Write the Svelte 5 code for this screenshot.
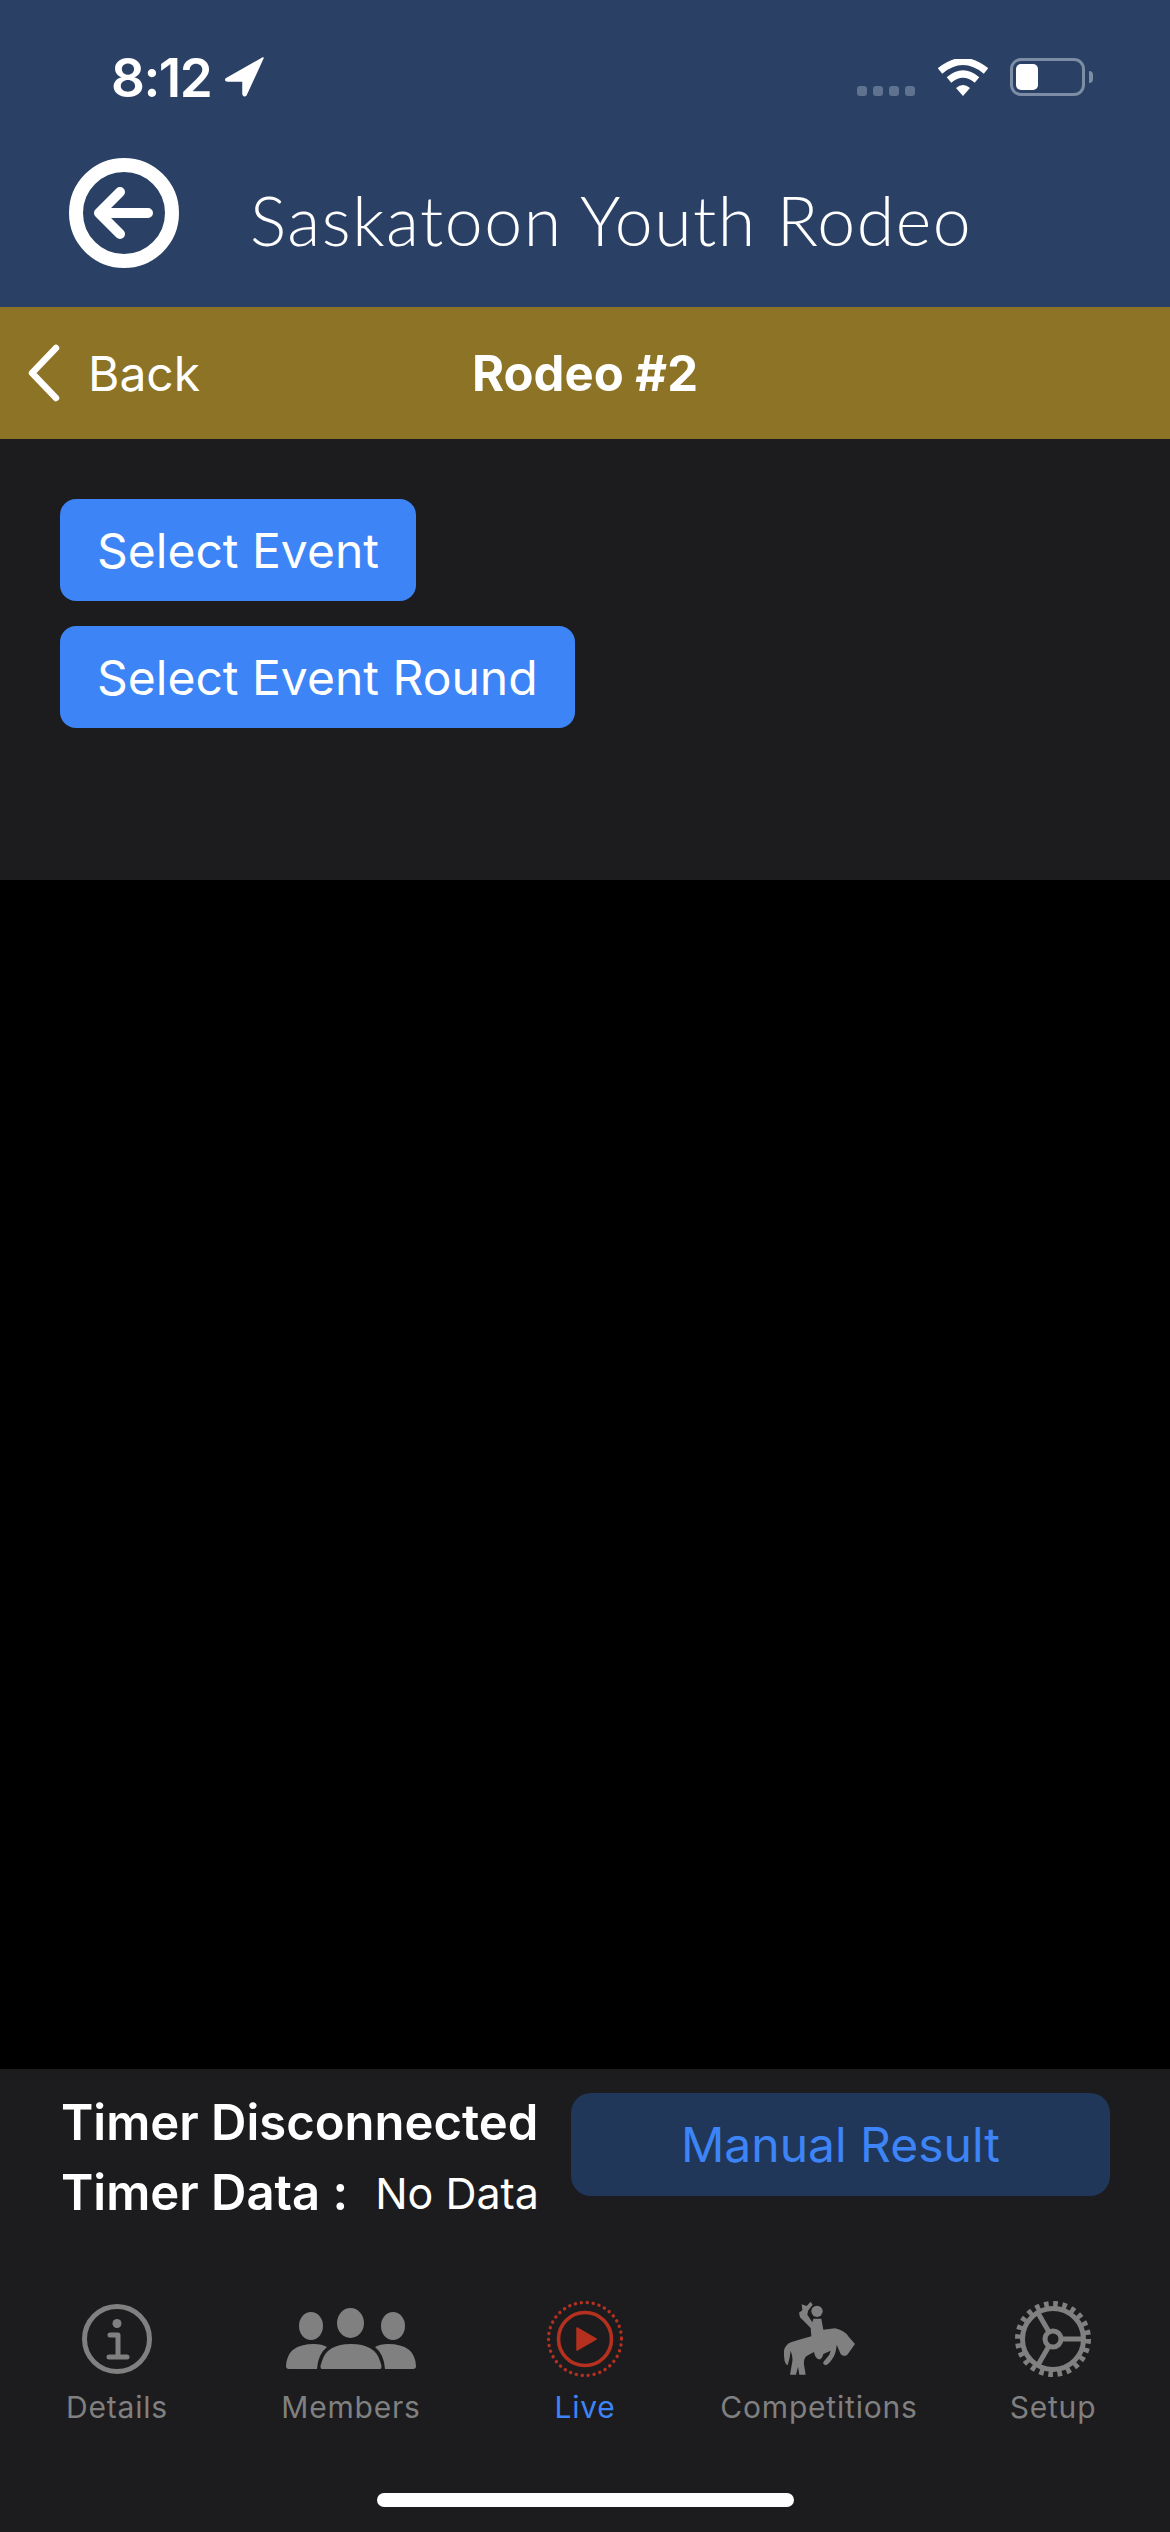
<script>
  const tabs = [
    { id: 'details', label: 'Details' },
    { id: 'members', label: 'Members' },
    { id: 'live', label: 'Live', active: true },
    { id: 'competitions', label: 'Competitions' },
    { id: 'setup', label: 'Setup' }
  ];
</script>

<div class="screen">
  <header class="header">
    <div class="status">
      <div class="time-wrap">
        <span class="time">8:12</span>
        <svg class="loc" viewBox="0 0 40 40" width="40" height="40"><path d="M38 1 L1 22 Q0 24 3 24 L18 24 L18 37 Q19 40 21 38 Z" fill="#fff" stroke="#fff" stroke-width="1.5" stroke-linejoin="round"/></svg>
      </div>
      <div class="status-right">
        <div class="dots"><i></i><i></i><i></i><i></i></div>
        <svg class="wifi" viewBox="0 0 50 38" width="50" height="38">
          <path d="M2 12 Q25 -7 48 12" fill="none" stroke="#fff" stroke-width="7"/>
          <path d="M11 21 Q25 9 39 21" fill="none" stroke="#fff" stroke-width="7"/>
          <path d="M18 29 Q25 23 32 29 L25 37 Z" fill="#fff"/>
        </svg>
        <div class="battery"><div class="cell"></div><div class="nub"></div></div>
      </div>
    </div>
    <div class="brand">
      <svg class="brand-icon" viewBox="0 0 110 110" width="110" height="110">
        <circle cx="55" cy="55" r="48" fill="none" stroke="#fff" stroke-width="14"/>
        <path d="M79 55 H31 M51 34 L30 55 L51 76" fill="none" stroke="#fff" stroke-width="10" stroke-linecap="round" stroke-linejoin="round"/>
      </svg>
      <span class="brand-title">Saskatoon Youth Rodeo</span>
    </div>
  </header>

  <nav class="nav">
    <div class="back">
      <svg viewBox="0 0 36 58" width="36" height="58"><path d="M30 4 L6 29 L30 54" fill="none" stroke="#fff" stroke-width="6.5" stroke-linecap="round" stroke-linejoin="round"/></svg>
      <span>Back</span>
    </div>
    <div class="nav-title">Rodeo #2</div>
    <div></div>
  </nav>

  <section class="panel">
    <button class="btn">Select Event</button>
    <button class="btn">Select Event Round</button>
  </section>

  <main class="void"></main>

  <footer class="footer">
    <div class="timer">
      <div class="timer-text">
        <div class="timer-line strong">Timer Disconnected</div>
        <div class="timer-line"><span class="strong">Timer Data :</span><span class="nodata">No Data</span></div>
      </div>
      <button class="manual">Manual Result</button>
    </div>

    <div class="tabs">
      {#each tabs as t}
        <div class="tab" class:active={t.active}>
          <div class="tab-icon">
            {#if t.id === 'details'}
              <svg viewBox="0 0 70 70" width="70" height="70">
                <circle cx="35" cy="35" r="32.5" fill="none" stroke="#808080" stroke-width="5"/>
                <circle cx="35" cy="19.5" r="4.5" fill="#808080"/>
                <path d="M28 31 H36 V52 M27 53 H45" fill="none" stroke="#808080" stroke-width="5" stroke-linecap="round" stroke-linejoin="round"/>
              </svg>
            {:else if t.id === 'members'}
              <svg viewBox="0 0 130 62" width="130" height="62">
                <ellipse cx="25" cy="18" rx="12" ry="14" fill="#808080"/>
                <ellipse cx="64.500" cy="15" rx="13.500" ry="15" fill="#808080"/>
                <ellipse cx="107" cy="18" rx="12" ry="14" fill="#808080"/>
                <path d="M0 58 Q1 36 28 36 Q36 36 41 39 Q32 46 31 61 H3 Q0 61 0 58 Z" fill="#808080"/>
                <path d="M130 58 Q129 36 102 36 Q94 36 89 39 Q98 46 99 61 H127 Q130 61 130 58 Z" fill="#808080"/>
                <path d="M36 61 Q33 61 36 53 Q41 36 65 36 Q89 36 94 53 Q97 61 94 61 Z" fill="#808080"/>
              </svg>
            {:else if t.id === 'live'}
              <svg viewBox="0 0 78 78" width="78" height="78">
                <circle cx="39" cy="39" r="36.500" fill="none" stroke="#b5301f" stroke-width="3.400" stroke-dasharray="0.1 5.900" stroke-linecap="round"/>
                <circle cx="39" cy="39" r="26.500" fill="none" stroke="#b5301f" stroke-width="3.600"/>
                <path d="M31 28 L50 39 L31 50 Z" fill="#b5301f" stroke="#b5301f" stroke-width="1.500" stroke-linejoin="round"/>
              </svg>
            {:else if t.id === 'competitions'}
              <svg viewBox="42 3 390 300" width="130" height="100">
                <circle cx="231" cy="70" r="17" fill="#808080"/>
                <path d="M177 74 L187 67 L185 49 L200 54 L212 41 L218 50 L204 68 L202 80 L217 103 L220 92 L244 92 L250 125 L285 121 Q312 126 326 146 L345 168 L322 200 Q312 208 302 198 L290 170 Q288 195 280 208 Q270 226 258 232 Q248 230 250 222 L268 200 L272 188 L250 198 Q246 216 236 214 Q226 212 222 192 L200 204 Q190 212 192 230 L197 260 L178 260 L174 236 L168 260 L150 260 L156 226 Q160 210 152 188 Q150 210 143 232 Q130 226 132 188 Q136 168 155 162 L185 153 L214 145 L212 120 L192 100 L180 88 Z" fill="#808080"/>
              </svg>
            {:else}
              <svg viewBox="0 0 78 78" width="78" height="78">
                <circle cx="39" cy="39" r="35" fill="none" stroke="#808080" stroke-width="6" stroke-dasharray="4.600 4.560"/>
                <circle cx="39" cy="39" r="30.500" fill="none" stroke="#808080" stroke-width="5"/>
                <circle cx="39" cy="39" r="8" fill="none" stroke="#808080" stroke-width="5"/>
                <path d="M47 39 H69 M35 32 L24 13 M35 46 L24 65" fill="none" stroke="#808080" stroke-width="5"/>
              </svg>
            {/if}
          </div>
          <span class="tab-label">{t.label}</span>
        </div>
      {/each}
    </div>

    <div class="home"></div>
  </footer>
</div>

<style>
  :global(body) { margin: 0; background: #000; }
  .screen {
    width: 1170px; height: 2532px; display: flex; flex-direction: column;
    font-family: Inter, "Liberation Sans", sans-serif; color: #fff; overflow: hidden;
  }
  .header { height: 307px; background: #2a4165; box-sizing: border-box; flex: none; }
  .status {
    height: 157px; box-sizing: border-box; padding: 50px 85px 0 111px;
    display: flex; justify-content: space-between; align-items: flex-start;
  }
  .time-wrap { display: flex; align-items: center; gap: 14px; height: 56px; }
  .time { font-size: 53px; font-weight: 600; line-height: 56px; letter-spacing: -1.5px; }
  .loc { margin-top: -3px; }
  .status-right { display: flex; align-items: flex-start; padding-top: 8px; }
  .dots { display: flex; gap: 6px; margin-top: 28px; margin-right: 23px; }
  .dots i { display: block; width: 10px; height: 10px; border-radius: 3px; background: #5f7390; }
  .wifi { margin-top: 1px; margin-right: 22px; }
  .battery {
    position: relative; width: 75px; height: 38px; box-sizing: border-box;
    border: 3px solid #7d8da6; border-radius: 11px; padding: 3px;
  }
  .cell { width: 22px; height: 100%; background: #fff; border-radius: 5px; }
  .nub {
    position: absolute; right: -11px; top: 10px; width: 4px; height: 12px;
    background: #7d8da6; border-radius: 0 6px 6px 0;
  }
  .brand { display: flex; align-items: center; padding-left: 69px; gap: 71px; height: 111px; }
  .brand-title {
    font-family: Lato, sans-serif; font-weight: 300; font-size: 68px; line-height: 1;
    letter-spacing: 1.5px; margin-top: 14px; white-space: nowrap;
  }
  .nav {
    height: 132px; background: #8c7326; flex: none; display: grid;
    grid-template-columns: 1fr auto 1fr; align-items: center;
  }
  .back { display: flex; align-items: center; padding-left: 26px; gap: 26px; font-size: 48px; }
  .nav-title { font-size: 49px; font-weight: 700; }
  .panel {
    height: 441px; flex: none; background: #1c1c1e; box-sizing: border-box;
    padding: 60px 60px 0; display: flex; flex-direction: column; align-items: flex-start; gap: 25px;
  }
  .btn {
    height: 102px; padding: 0 37px; background: #3d84f7; color: #fff; border: 0;
    border-radius: 16px; font: 400 48px Inter, sans-serif;
  }
  .void { flex: 1; background: #000; }
  .footer { height: 463px; flex: none; background: #1c1c1e; display: flex; flex-direction: column; }
  .timer { display: flex; height: 225px; box-sizing: border-box; padding: 24px 60px 0 61px; justify-content: space-between; }
  .timer-text { width: 478px; margin-top: -5px; }
  .timer-line { height: 70px; font-size: 49px; line-height: 70px; display: flex; justify-content: space-between; white-space: nowrap; }
  .strong { font-weight: 600; }
  .nodata { font-size: 43px; }
  .manual {
    width: 539px; height: 103px; border: 0; border-radius: 20px; background: #20375a;
    color: #3d84f7; font: 400 48px Inter, sans-serif;
  }
  .tabs { display: grid; grid-template-columns: repeat(5, 1fr); }
  .tab { display: flex; flex-direction: column; align-items: center; }
  .tab-icon { height: 90px; display: flex; align-items: center; justify-content: center; }
  .tab-label { font-size: 30px; line-height: 36px; margin-top: 5px; color: #808080; letter-spacing: 0.8px; }
  .active .tab-label { color: #3d84f7; }
  .home { width: 417px; height: 14px; border-radius: 7px; background: #fff; margin: auto auto 25px; }
</style>
